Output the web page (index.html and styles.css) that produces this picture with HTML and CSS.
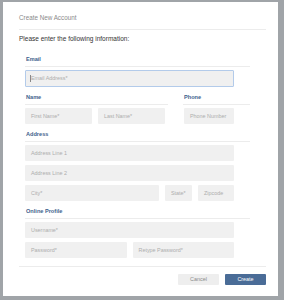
FILE: index.html
```html
<!DOCTYPE html>
<html>
<head>
<meta charset="utf-8">
<link rel="stylesheet" href="styles.css">
</head>
<body>
<div class="dialog">
  <div class="header">Create New Account</div>
  <div class="intro">Please enter the following information:</div>
  <div class="form">
    <div class="section">
      <div class="label">Email</div>
      <div class="row">
        <div class="input focused w-full"><span class="caret"></span>Email Address*</div>
      </div>
    </div>
    <div class="split">
      <div class="section name-col">
        <div class="label">Name</div>
        <div class="row">
          <div class="input w-name">First Name*</div>
          <div class="input w-name">Last Name*</div>
        </div>
      </div>
      <div class="section phone-col">
        <div class="label">Phone</div>
        <div class="row">
          <div class="input w-phone">Phone Number</div>
        </div>
      </div>
    </div>
    <div class="section">
      <div class="label">Address</div>
      <div class="row"><div class="input w-full">Address Line 1</div></div>
      <div class="row"><div class="input w-full">Address Line 2</div></div>
      <div class="row">
        <div class="input w-city">City*</div>
        <div class="input w-state">State*</div>
        <div class="input w-zip">Zipcode</div>
      </div>
    </div>
    <div class="section">
      <div class="label">Online Profile</div>
      <div class="row"><div class="input w-full">Username*</div></div>
      <div class="row">
        <div class="input w-pass">Password*</div>
        <div class="input w-pass">Retype Password*</div>
      </div>
    </div>
  </div>
  <div class="footer">
    <div class="btn cancel">Cancel</div>
    <div class="btn create">Create</div>
  </div>
</div>
</body>
</html>
```
FILE: styles.css
```css
html, body {
  margin: 0;
  padding: 0;
  background: #a0a4a8;
  width: 284px;
  height: 300px;
  overflow: hidden;
  font-family: "Liberation Sans", Arial, sans-serif;
}
.dialog {
  margin: 2px 0 0 3px;
  width: 275px;
  height: 294px;
  background: #ffffff;
  box-sizing: border-box;
}
.header {
  margin: 0 12px 0 16px;
  height: 28px;
  box-sizing: border-box;
  padding-top: 12px;
  line-height: 8px;
  font-size: 6.3px;
  color: #8a8a8a;
  border-bottom: 1px solid #ececec;
}
.intro {
  margin-left: 16px;
  padding: 5px 0 6px;
  line-height: 8px;
  font-size: 6.5px;
  color: #333333;
}
.form {
  margin-left: 22px;
  width: 225px;
}
.section {
  display: flex;
  flex-direction: column;
  gap: 4px;
}
.label {
  padding: 6px 0 3px 1px;
  line-height: 8px;
  font-size: 5.6px;
  font-weight: bold;
  color: #3e5f8c;
  border-bottom: 1px solid #ececec;
  margin-bottom: -1px;
}
.row {
  display: flex;
  gap: 6px;
}
.split {
  display: flex;
  gap: 15px;
}
.name-col { width: 143px; }
.phone-col { width: 67px; }
.phone-col .row { padding-left: 1px; }
.input {
  height: 16px;
  box-sizing: border-box;
  background: #f0f0f0;
  border-radius: 1px;
  font-size: 5.4px;
  line-height: 16px;
  color: #adadad;
  padding-left: 6px;
  white-space: nowrap;
}
.input.focused {
  height: 17px;
  line-height: 15px;
  border: 1px solid #b3cbea;
  padding-left: 4px;
}
.caret {
  display: inline-block;
  width: 0.5px;
  height: 7px;
  background: #888;
  vertical-align: middle;
  margin-right: 0.5px;
}
.w-full { width: 209px; }
.w-name { width: 67px; }
.w-phone { width: 50px; }
.w-city { width: 134px; }
.w-state { width: 27px; }
.w-zip { width: 36px; }
.w-pass { width: 101.5px; }
.footer {
  margin: 8px 12px 0 16px;
  border-top: 1px solid #ececec;
  padding-top: 7px;
  display: flex;
  justify-content: flex-end;
  gap: 6px;
}
.btn {
  width: 41px;
  height: 11px;
  line-height: 11px;
  text-align: center;
  font-size: 5.4px;
  border-radius: 1px;
}
.cancel {
  background: #eeeeee;
  color: #8a8a8a;
}
.create {
  background: #4a6c97;
  color: #ffffff;
}
```
